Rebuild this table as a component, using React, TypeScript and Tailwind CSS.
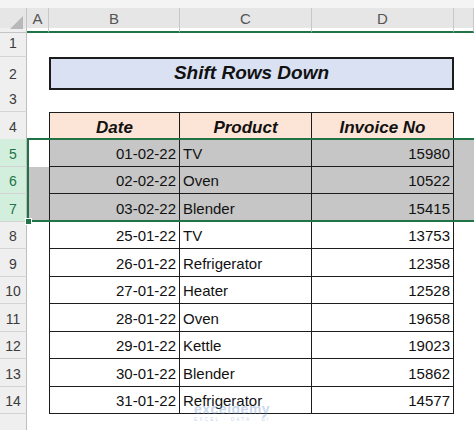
import React from "react";

type Row = {
  n: number;
  h: string;
  date?: string;
  product?: string;
  inv?: string;
  sel?: boolean;
  selA?: boolean;
};

const dataRows: Row[] = [
  { n: 5, h: "h-[28px]", date: "01-02-22", product: "TV", inv: "15980", sel: true },
  { n: 6, h: "h-[27px]", date: "02-02-22", product: "Oven", inv: "10522", sel: true, selA: true },
  { n: 7, h: "h-[28px]", date: "03-02-22", product: "Blender", inv: "15415", sel: true, selA: true },
  { n: 8, h: "h-[27px]", date: "25-01-22", product: "TV", inv: "13753" },
  { n: 9, h: "h-[28px]", date: "26-01-22", product: "Refrigerator", inv: "12358" },
  { n: 10, h: "h-[27px]", date: "27-01-22", product: "Heater", inv: "12528" },
  { n: 11, h: "h-[28px]", date: "28-01-22", product: "Oven", inv: "19658" },
  { n: 12, h: "h-[27px]", date: "29-01-22", product: "Kettle", inv: "19023" },
  { n: 13, h: "h-[28px]", date: "30-01-22", product: "Blender", inv: "15862" },
  { n: 14, h: "h-[27px]", date: "31-01-22", product: "Refrigerator", inv: "14577" },
];

const grid = "grid grid-cols-[27px_22px_131px_132px_142px_1fr]";

const RowNum = ({ n, sel }: { n?: number; sel?: boolean }) => (
  <div
    className={
      "flex items-center justify-center pt-[3px] text-[14px] border-b border-r border-b-[#d4d4d4] border-r-[#bdbdbd] " +
      (sel ? "bg-[#d2eedc] text-[#217346]" : "bg-[#efefef] text-[#3b3b3b]")
    }
  >
    {n}
  </div>
);

export default function App() {
  return (
    <div className="relative w-[474px] h-[430px] overflow-hidden bg-white font-['Liberation_Sans',Arial,sans-serif] text-[#111]">
      <div className="h-[8px] bg-[#f4f4f4]" />

      {/* column headers */}
      <div className={grid + " h-[20px] bg-[#e6e6e6] text-[15px] text-[#555]"}>
        <div className="relative border-r border-b border-[#c4c4c4]">
          <svg className="absolute right-[3px] bottom-[3px]" width="13" height="13" viewBox="0 0 13 13">
            <polygon points="13,0 13,13 0,13" fill="#b8b8b8" />
          </svg>
        </div>
        {["A", "B", "C", "D", ""].map((c, i) => (
          <div
            key={i}
            className="flex items-center justify-center border-r border-r-[#c8c8c8] border-b-2 border-b-[#217346]"
          >
            {c}
          </div>
        ))}
      </div>

      {/* row 1 */}
      <div className={grid + " h-[29px]"}>
        <RowNum n={1} />
        <div className="col-span-5" />
      </div>

      {/* row 2: title */}
      <div className={grid + " h-[28px]"}>
        <RowNum n={2} />
        <div />
        <div className="col-span-3 flex items-center justify-center bg-[#d9e1f2] border-2 border-[#1c1c1c] text-[19px] font-bold italic">
          Shift Rows Down
        </div>
        <div />
      </div>

      {/* row 3 */}
      <div className={grid + " h-[27px]"}>
        <RowNum n={3} />
        <div className="col-span-5" />
      </div>

      {/* row 4: table header */}
      <div className={grid + " h-[27px]"}>
        <RowNum n={4} />
        <div />
        {["Date", "Product", "Invoice No"].map((t, i) => (
          <div
            key={t}
            className={
              "flex items-center justify-center pt-[2px] bg-[#fce4d6] border-t border-r border-b border-[#1c1c1c] text-[17px] font-bold italic " +
              (i === 0 ? "border-l" : "")
            }
          >
            {t}
          </div>
        ))}
        <div />
      </div>

      {/* data rows */}
      {dataRows.map((r) => (
        <div key={r.n} className={grid + " " + r.h + " text-[15px]"}>
          <RowNum n={r.n} sel={r.sel} />
          <div className={r.selA ? "bg-[#c6c6c6]" : ""} />
          <div
            className={
              "flex items-center justify-end pt-[3px] pr-[3px] border-l border-r border-b border-[#1c1c1c] " +
              (r.sel ? "bg-[#c6c6c6]" : "")
            }
          >
            {r.date}
          </div>
          <div
            className={
              "flex items-center pt-[3px] pl-[3px] border-r border-b border-[#1c1c1c] " +
              (r.sel ? "bg-[#c6c6c6]" : "")
            }
          >
            {r.product}
          </div>
          <div
            className={
              "flex items-center justify-end pt-[3px] pr-[3px] border-r border-b border-[#1c1c1c] " +
              (r.sel ? "bg-[#c6c6c6]" : "")
            }
          >
            {r.inv}
          </div>
          <div className={r.sel ? "bg-[#c6c6c6]" : ""} />
        </div>
      ))}

      {/* row 15, cut off by the window */}
      <div className={grid + " h-[20px]"}>
        <RowNum />
        <div className="col-span-5" />
      </div>

      {/* selection outline */}
      <div className="absolute left-[27px] top-[138px] w-[460px] h-[84px] border-2 border-[#217346]" />
      <div className="absolute left-[25px] top-[218px] w-[7px] h-[7px] bg-[#217346] border border-white" />

      {/* watermark */}
      <div className="absolute left-[194px] top-[402px] flex flex-col items-center opacity-35 text-[#6b8fc4]">
        <div className="text-[14px] leading-[14px] font-bold tracking-[0.5px]">exceldemy</div>
        <div className="text-[5px] leading-[6px] tracking-[2px]">EXCEL · DATA · BI</div>
      </div>
    </div>
  );
}
